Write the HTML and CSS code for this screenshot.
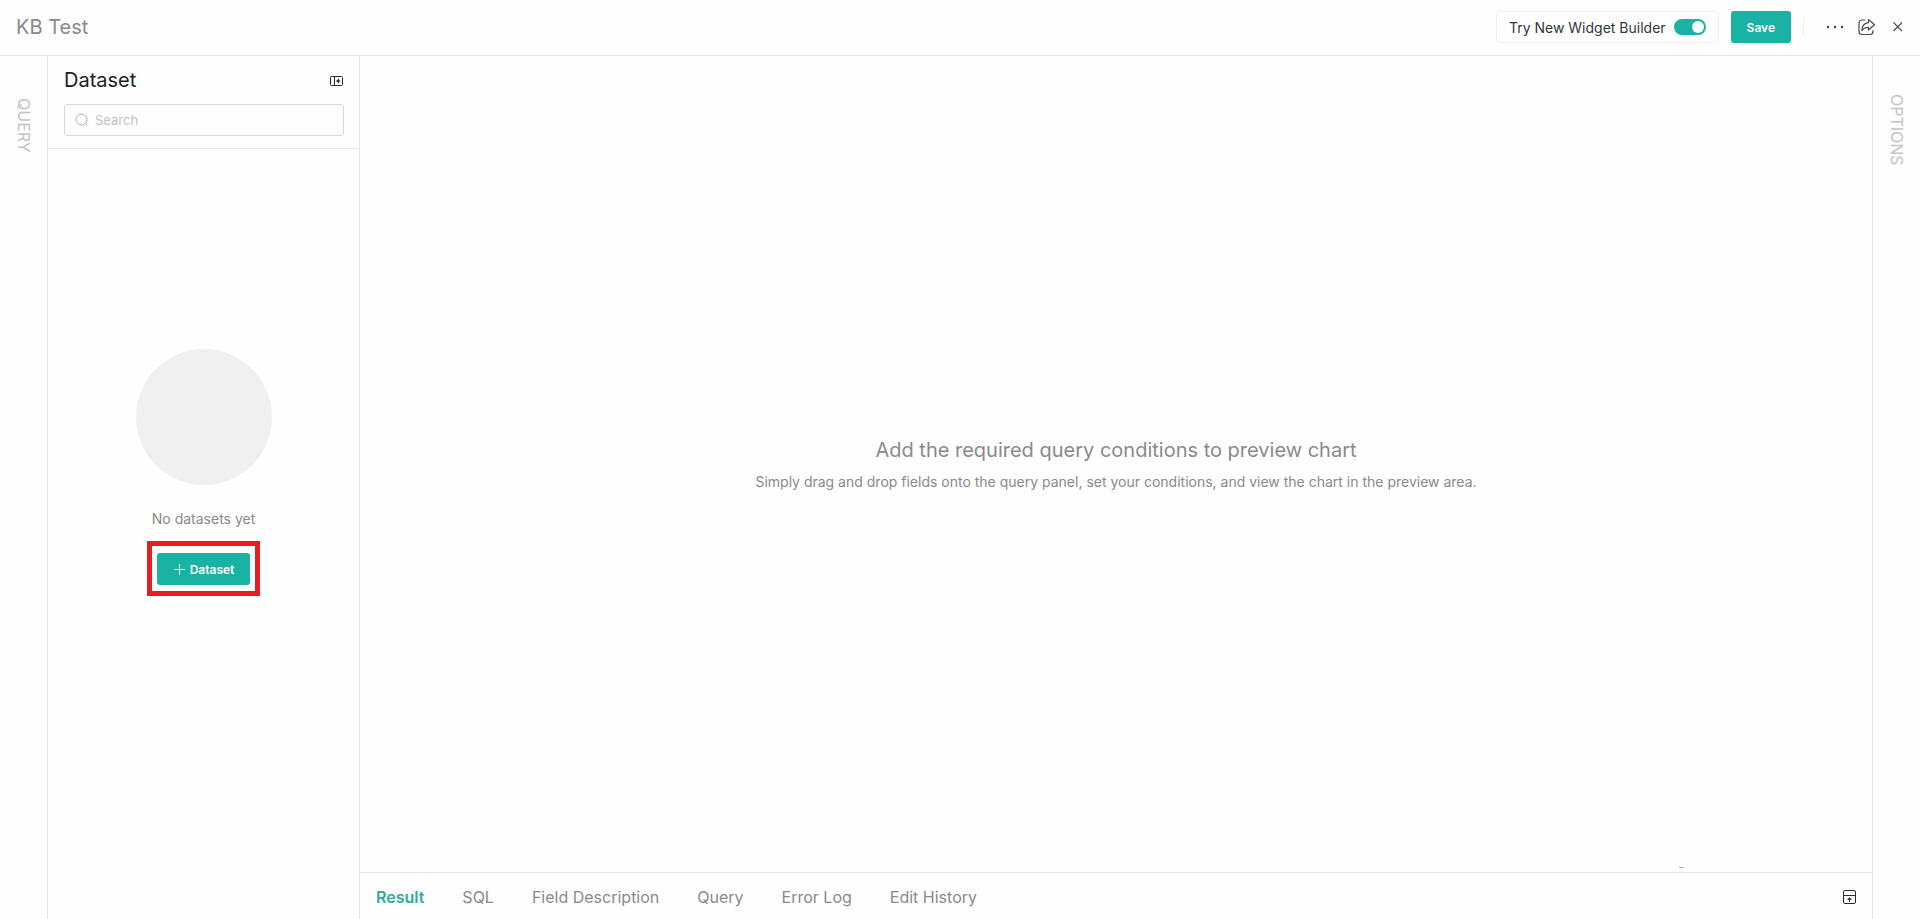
FILE: index.html
```
<!DOCTYPE html>
<html lang="en">
<head>
    <meta charset="UTF-8">
    <meta name="viewport" content="width=device-width, initial-scale=1.0">
    <title>KB Test</title>
    <link rel="stylesheet" href="styles.css">
</head>
<body>
    <header class="topbar">
        <h1>KB Test</h1>
        <div class="actions">
            <label class="builder-switch" for="newBuilder">
                Try New Widget Builder
                <input type="checkbox" id="newBuilder" class="switch" checked>
            </label>
            <button type="button" class="btn btn-save">Save</button>
            <span class="divider"></span>
            <button type="button" class="icon-btn" aria-label="More">
                <svg width="20" height="20" viewBox="0 0 20 20" fill="#3c4043">
                    <circle cx="4" cy="10" r="1.2"/>
                    <circle cx="11" cy="10" r="1.2"/>
                    <circle cx="18" cy="10" r="1.2"/>
                </svg>
            </button>
            <button type="button" class="icon-btn" aria-label="Share">
                <svg width="20" height="20" viewBox="0 0 20 20" fill="none" stroke="#4a4a4a" stroke-width="1.2" stroke-linejoin="round" stroke-linecap="round">
                    <path d="M9 3H6A3 3 0 0 0 3 6V14.500A3 3 0 0 0 6 17.500H14A3 3 0 0 0 17 14.500V13.500"/>
                    <path d="M12.500 2.500L18.500 7.800L12.500 13V10.300C9 10.200 7.300 11.200 5.800 13.700C6 9.300 8.200 6 12.500 5.600Z"/>
                </svg>
            </button>
            <button type="button" class="icon-btn" aria-label="Close">
                <svg width="20" height="20" viewBox="0 0 20 20" fill="none" stroke="#4a4a4a" stroke-width="1.1">
                    <path d="M5.500 5.500L14 14M14 5.500L5.500 14"/>
                </svg>
            </button>
        </div>
    </header>

    <div class="workspace">
        <button type="button" class="rail rail-query">QUERY</button>

        <!-- dataset panel -->
        <aside class="dataset">
            <div class="dataset-head">
                <div class="dataset-title">
                    <h2>Dataset</h2>
                    <button type="button" class="icon-btn" aria-label="Collapse panel">
                        <svg width="14" height="14" viewBox="0 0 14 14" fill="none" stroke="#2a2a2a" stroke-width="1">
                            <rect x="0.500" y="3.500" width="12" height="9" rx="1"/>
                            <path d="M4.500 3.500V12.500"/>
                            <path d="M6 8L9 5.500V10.500Z" fill="#2a2a2a" stroke="none"/>
                            <path d="M8 8H10.500"/>
                        </svg>
                    </button>
                </div>
                <div class="search">
                    <svg width="14" height="14" viewBox="0 0 14 14" fill="none" stroke="#a9adb2" stroke-width="1">
                        <circle cx="6.500" cy="6.500" r="5.500"/>
                        <path d="M10.500 10.500L12.500 12.500"/>
                    </svg>
                    <input type="text" placeholder="Search" aria-label="Search">
                </div>
            </div>
            <div class="dataset-empty">
                <div class="empty-circle"></div>
                <p>No datasets yet</p>
                <div class="highlight">
                    <button type="button" class="btn btn-add">
                        <svg width="12" height="12" viewBox="0 0 12 12" fill="none" stroke="#fff" stroke-width="1">
                            <path d="M6.500 1V12M1 6.500H12"/>
                        </svg>
                        Dataset
                    </button>
                </div>
            </div>
        </aside>

        <!-- chart preview and result tabs -->
        <main class="main">
            <div class="preview">
                <h3>Add the required query conditions to preview chart</h3>
                <p>Simply drag and drop fields onto the query panel, set your conditions, and view the chart in the preview area.</p>
                <span class="drag-mark"></span>
            </div>
            <nav class="tabs">
                <button type="button" class="tab active">Result</button>
                <button type="button" class="tab">SQL</button>
                <button type="button" class="tab">Field Description</button>
                <button type="button" class="tab">Query</button>
                <button type="button" class="tab">Error Log</button>
                <button type="button" class="tab">Edit History</button>
                <button type="button" class="icon-btn expand" aria-label="Expand panel">
                    <svg width="16" height="16" viewBox="0 0 16 16" fill="none" stroke="#2a2a2a" stroke-width="1">
                        <rect x="2.500" y="1.500" width="12" height="13" rx="1.500"/>
                        <path d="M2.500 6.500H14.500M8.500 9V13"/>
                        <path d="M6 10.800L8.500 8.200L11 10.800Z" fill="#2a2a2a" stroke="none"/>
                    </svg>
                </button>
            </nav>
        </main>

        <button type="button" class="rail rail-options">OPTIONS</button>
    </div>
</body>
</html>
```
FILE: styles.css
```
* {
    box-sizing: border-box;
}
body {
    display: flex;
    flex-direction: column;
    height: 100vh;
    margin: 0;
    font-family: Inter, "Liberation Sans", sans-serif;
    font-size: 14px;
    color: #8a8a8a;
    background-color: #fefefe;
}
h1, h2, h3, p {
    margin: 0;
}
h1, h2, h3 {
    font-size: 20px;
    font-weight: 400;
    line-height: 24px;
}
button {
    padding: 0;
    border: none;
    background: none;
    font-family: inherit;
    color: inherit;
    cursor: pointer;
}
svg {
    display: block;
}

.topbar {
    display: flex;
    justify-content: space-between;
    align-items: center;
    padding: 11px 12px 12px 16px;
    border-bottom: 1px solid #e6e6e6;
}
.actions {
    display: flex;
    align-items: center;
    gap: 12px;
}
.builder-switch {
    display: flex;
    align-items: center;
    gap: 8px;
    height: 32px;
    padding: 0 12px;
    border: 1px solid #f0f0f0;
    border-radius: 4px;
    color: #34373b;
}
.switch {
    appearance: none;
    display: flex;
    justify-content: flex-end;
    width: 32px;
    height: 16px;
    margin: 0;
    padding: 2px;
    border-radius: 8px;
    background-color: #1ab3a3;
}
.switch::before {
    content: "";
    width: 12px;
    height: 12px;
    border-radius: 50%;
    background-color: white;
}
.switch:not(:checked) {
    justify-content: flex-start;
    background-color: #ccc;
}
.btn {
    display: flex;
    justify-content: center;
    align-items: center;
    gap: 5px;
    height: 32px;
    padding: 0 16px;
    border-radius: 3px;
    background-color: #1ab3a3;
    color: white;
    font-size: 12px;
    font-weight: 600;
}
.divider {
    width: 1px;
    height: 18px;
    margin-right: 8px;
    background-color: #ececec;
}
.topbar .icon-btn {
    width: 20px;
}

.workspace {
    display: flex;
    flex: 1;
    min-height: 0;
}
.rail {
    display: flex;
    align-items: center;
    width: 48px;
    writing-mode: vertical-rl;
    font-size: 16px;
    color: #c4c4c4;
}
.rail-query {
    padding-top: 42px;
    border-right: 1px solid #e6e6e6;
}
.rail-options {
    padding-top: 38px;
    border-left: 1px solid #e6e6e6;
}

.dataset {
    display: flex;
    flex-direction: column;
    width: 312px;
    border-right: 1px solid #e6e6e6;
}
.dataset-head {
    padding: 12px 15px 12px 16px;
    border-bottom: 1px solid #e6e6e6;
}
.dataset-title {
    display: flex;
    justify-content: space-between;
    align-items: center;
    margin-bottom: 12px;
}
.dataset-title h2 {
    color: #1c1e20;
}
.search {
    display: flex;
    align-items: center;
    gap: 6px;
    height: 32px;
    padding: 0 10px;
    border: 1px solid #d9d9d9;
    border-radius: 3px;
}
.search input {
    flex: 1;
    min-width: 0;
    padding: 0;
    border: none;
    outline: none;
    background: none;
    font-family: inherit;
    font-size: 13px;
}
.search input::placeholder {
    color: #bfc2c5;
}
.dataset-empty {
    display: flex;
    flex: 1;
    flex-direction: column;
    justify-content: center;
    align-items: center;
    padding-bottom: 123px;
}
.empty-circle {
    width: 136px;
    height: 136px;
    margin-bottom: 24px;
    border-radius: 50%;
    background-color: #f0f0f0;
}
.dataset-empty p {
    margin-bottom: 12px;
    line-height: 20px;
}
.highlight {
    padding: 7px 5px 6px;
    border: 5px solid #e81c24;
}

.main {
    display: flex;
    flex: 1;
    flex-direction: column;
    min-width: 0;
}
.preview {
    position: relative;
    display: flex;
    flex: 1;
    flex-direction: column;
    justify-content: center;
    align-items: center;
    gap: 10px;
    padding-top: 2px;
    text-align: center;
}
.preview p {
    line-height: 20px;
}
.drag-mark {
    position: absolute;
    right: 188px;
    bottom: 4px;
    width: 5px;
    height: 1px;
    background-color: #aaa;
}
.tabs {
    display: flex;
    align-items: center;
    gap: 38px;
    padding: 14px 15px 12px 16px;
    border-top: 1px solid #e6e6e6;
}
.tab {
    font-size: 16px;
    line-height: 20px;
}
.tab.active {
    color: #2fab9b;
    font-weight: 600;
}
.expand {
    margin-left: auto;
}
```
